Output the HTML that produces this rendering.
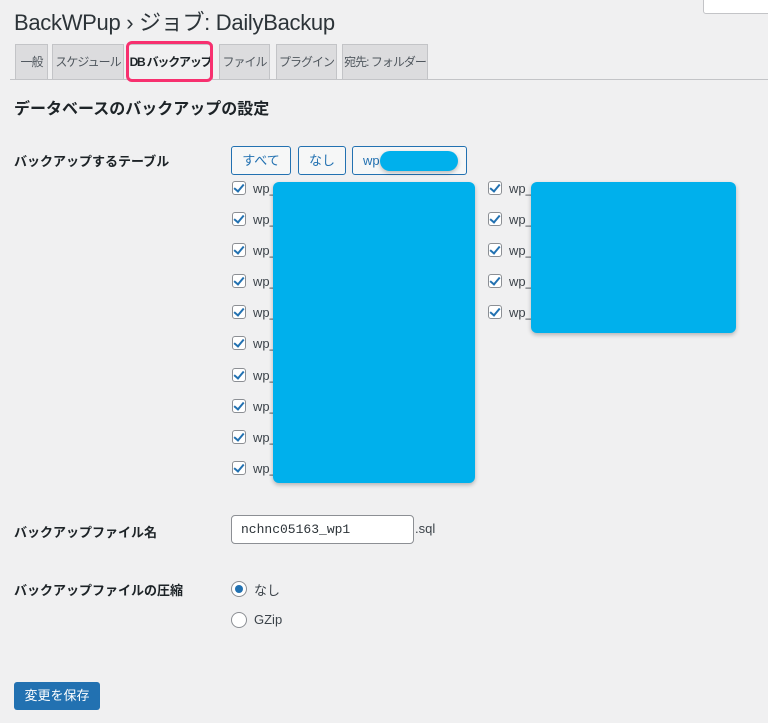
<!DOCTYPE html>
<html><head><meta charset="utf-8"><style>
body{margin:0;width:768px;height:723px;background:#f0f0f1;font-family:"Liberation Sans","Noto Sans CJK JP",sans-serif;color:#1d2327;position:relative;overflow:hidden;font-size:13px}
.a{position:absolute;white-space:nowrap}
.tab{position:absolute;top:44px;height:35px;background:#dcdcde;border:1px solid #c3c4c7;border-bottom:none;box-sizing:border-box;font-size:12px;color:#50575e;line-height:34px;text-align:center;white-space:nowrap;overflow:hidden;letter-spacing:-1px}
.cb{position:absolute;width:14px;height:14px;border:1px solid #8c8f94;border-radius:3px;background:#fff;box-sizing:border-box}
.cb:after{content:"";position:absolute;left:3px;top:0px;width:4px;height:8px;border:solid #2271b1;border-width:0 2px 2px 0;transform:rotate(40deg)}
.wp{position:absolute;font-size:13px;color:#3c434a}
.btn{position:absolute;top:146px;height:29px;border:1px solid #2271b1;border-radius:3px;background:#f6f7f7;color:#2271b1;box-sizing:border-box;font-size:13px;line-height:27px;text-align:center;white-space:nowrap}
.lbl{position:absolute;left:14px;font-weight:bold;font-size:13px;white-space:nowrap}
.blue{position:absolute;background:#00b0ec;border-radius:6px;box-shadow:0 2px 4px rgba(0,0,0,.25)}
</style></head><body>
<div class="a" style="left:703px;top:-4px;width:70px;height:16px;border:1px solid #c3c4c7;border-radius:3px;background:#fff"></div>
<div class="a" style="left:14px;top:5px;font-size:22px;color:#2c3338;letter-spacing:-0.3px">BackWPup › ジョブ: DailyBackup</div>
<div class="a" style="left:10px;top:79px;width:758px;height:1px;background:#c3c4c7"></div>
<div class="tab" style="left:15px;width:33px">一般</div>
<div class="tab" style="left:52px;width:72px">スケジュール</div>
<div class="tab" style="left:128px;width:85px;background:#f0f0f1;color:#1d2327;font-weight:bold;height:36px;font-size:12px;letter-spacing:-1.2px">DB バックアップ</div>
<div class="a" style="left:126px;top:41px;width:87px;height:41px;border:3px solid #f7306f;border-radius:6px;box-sizing:border-box"></div>
<div class="tab" style="left:219px;width:51px">ファイル</div>
<div class="tab" style="left:276px;width:61px">プラグイン</div>
<div class="tab" style="left:342px;width:86px">宛先: フォルダー</div>
<div class="a" style="left:14px;top:95px;font-size:16px;font-weight:bold">データベースのバックアップの設定</div>
<div class="lbl" style="top:151px">バックアップするテーブル</div>
<div class="btn" style="left:231px;width:60px">すべて</div>
<div class="btn" style="left:298px;width:48px">なし</div>
<div class="btn" style="left:352px;width:115px;text-align:left;padding-left:10px">wp</div>
<div class="blue" style="left:380px;top:151px;width:78px;height:20px;border-radius:10px"></div>
<div class="cb" style="left:232px;top:181px"></div><div class="wp" style="left:253px;top:181px">wp_</div>
<div class="cb" style="left:232px;top:212px"></div><div class="wp" style="left:253px;top:212px">wp_</div>
<div class="cb" style="left:232px;top:243px"></div><div class="wp" style="left:253px;top:243px">wp_</div>
<div class="cb" style="left:232px;top:274px"></div><div class="wp" style="left:253px;top:274px">wp_</div>
<div class="cb" style="left:232px;top:305px"></div><div class="wp" style="left:253px;top:305px">wp_</div>
<div class="cb" style="left:232px;top:336px"></div><div class="wp" style="left:253px;top:336px">wp_</div>
<div class="cb" style="left:232px;top:368px"></div><div class="wp" style="left:253px;top:368px">wp_</div>
<div class="cb" style="left:232px;top:399px"></div><div class="wp" style="left:253px;top:399px">wp_</div>
<div class="cb" style="left:232px;top:430px"></div><div class="wp" style="left:253px;top:430px">wp_</div>
<div class="cb" style="left:232px;top:461px"></div><div class="wp" style="left:253px;top:461px">wp_</div>
<div class="cb" style="left:488px;top:181px"></div><div class="wp" style="left:509px;top:181px">wp_</div>
<div class="cb" style="left:488px;top:212px"></div><div class="wp" style="left:509px;top:212px">wp_</div>
<div class="cb" style="left:488px;top:243px"></div><div class="wp" style="left:509px;top:243px">wp_</div>
<div class="cb" style="left:488px;top:274px"></div><div class="wp" style="left:509px;top:274px">wp_</div>
<div class="cb" style="left:488px;top:305px"></div><div class="wp" style="left:509px;top:305px">wp_</div>
<div class="blue" style="left:273px;top:182px;width:202px;height:301px"></div>
<div class="blue" style="left:531px;top:182px;width:205px;height:151px"></div>
<div class="lbl" style="top:522px">バックアップファイル名</div>
<div class="a" style="left:231px;top:515px;width:183px;height:29px;border:1px solid #8c8f94;border-radius:4px;background:#fff;box-sizing:border-box;font-family:'Liberation Mono',monospace;font-size:13px;line-height:27px;padding-left:9px;color:#2c3338">nchnc05163_wp1</div>
<div class="a" style="left:415px;top:521px;color:#3c434a">.sql</div>
<div class="lbl" style="top:580px">バックアップファイルの圧縮</div>
<div class="a" style="left:231px;top:581px;width:16px;height:16px;border:1px solid #8c8f94;border-radius:50%;background:#fff;box-sizing:border-box"></div>
<div class="a" style="left:235px;top:585px;width:8px;height:8px;border-radius:50%;background:#2271b1"></div>
<div class="a" style="left:254px;top:580px;color:#3c434a">なし</div>
<div class="a" style="left:231px;top:612px;width:16px;height:16px;border:1px solid #8c8f94;border-radius:50%;background:#fff;box-sizing:border-box"></div>
<div class="a" style="left:254px;top:612px;color:#3c434a">GZip</div>
<div class="a" style="left:14px;top:682px;width:86px;height:28px;background:#2271b1;border-radius:3px;color:#fff;font-size:13px;line-height:28px;text-align:center">変更を保存</div>
</body></html>
